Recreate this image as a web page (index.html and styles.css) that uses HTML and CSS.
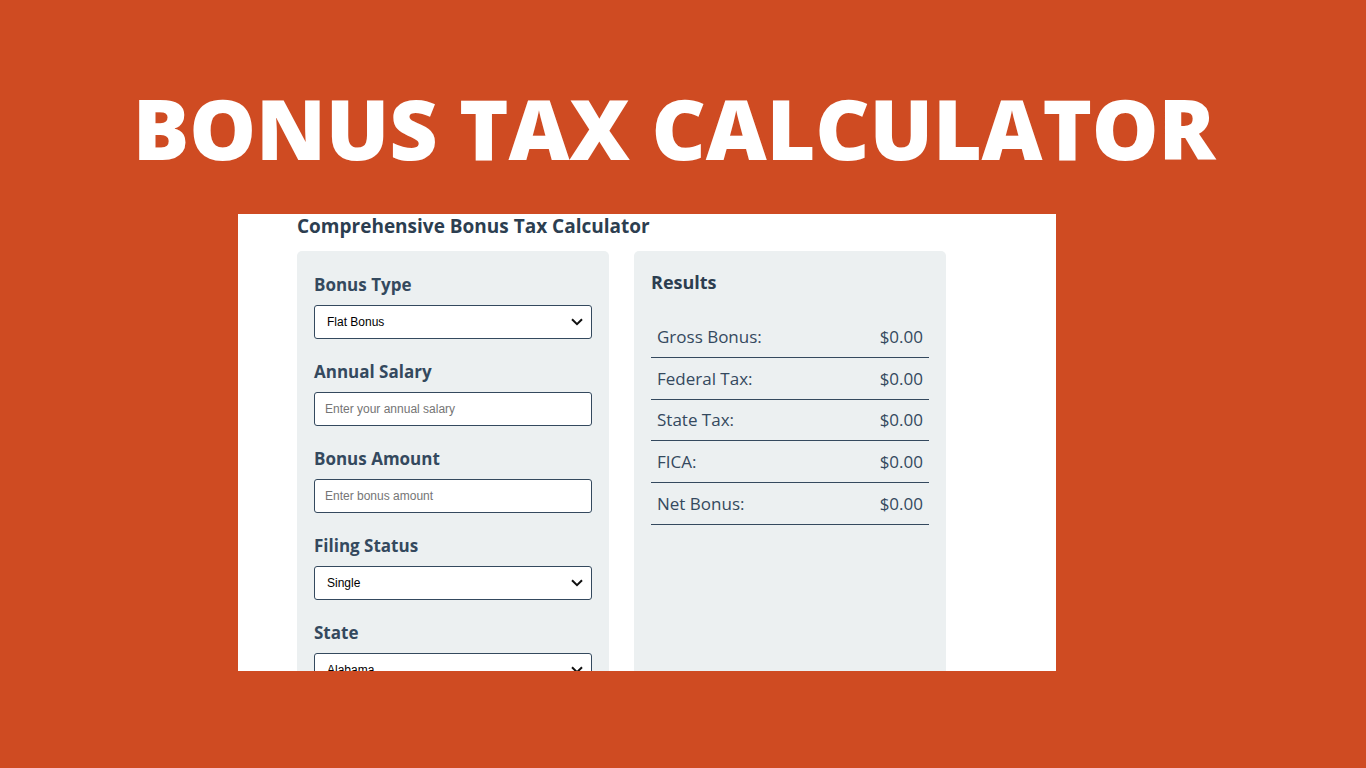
FILE: index.html
```html
<!DOCTYPE html>
<html>
<head>
<meta charset="utf-8">
<link rel="stylesheet" href="styles.css">
</head>
<body>
<h1 class="hero">BONUS TAX CALCULATOR</h1>
<div class="panel">
  <h2 class="calc-title">Comprehensive Bonus Tax Calculator</h2>
  <div class="cards">
    <div class="card form">
      <div class="field">
        <label class="label">Bonus Type</label>
        <div class="select-wrap">
          <select class="control"><option>Flat Bonus</option></select>
          <svg class="chev" viewBox="0 0 12 8" width="12" height="8"><path d="M1 1.2 L6 6.2 L11 1.2" fill="none" stroke="#111" stroke-width="2"/></svg>
        </div>
      </div>
      <div class="field">
        <label class="label">Annual Salary</label>
        <input class="control input" type="text" placeholder="Enter your annual salary">
      </div>
      <div class="field">
        <label class="label">Bonus Amount</label>
        <input class="control input" type="text" placeholder="Enter bonus amount">
      </div>
      <div class="field">
        <label class="label">Filing Status</label>
        <div class="select-wrap">
          <select class="control"><option>Single</option></select>
          <svg class="chev" viewBox="0 0 12 8" width="12" height="8"><path d="M1 1.2 L6 6.2 L11 1.2" fill="none" stroke="#111" stroke-width="2"/></svg>
        </div>
      </div>
      <div class="field">
        <label class="label">State</label>
        <div class="select-wrap">
          <select class="control"><option>Alabama</option></select>
          <svg class="chev" viewBox="0 0 12 8" width="12" height="8"><path d="M1 1.2 L6 6.2 L11 1.2" fill="none" stroke="#111" stroke-width="2"/></svg>
        </div>
      </div>
    </div>
    <div class="card results">
      <h3 class="results-title">Results</h3>
      <div class="rows">
        <div class="row"><span>Gross Bonus:</span><span>$0.00</span></div>
        <div class="row"><span>Federal Tax:</span><span>$0.00</span></div>
        <div class="row"><span>State Tax:</span><span>$0.00</span></div>
        <div class="row"><span>FICA:</span><span>$0.00</span></div>
        <div class="row"><span>Net Bonus:</span><span>$0.00</span></div>
      </div>
    </div>
  </div>
</div>
</body>
</html>
```
FILE: styles.css
```css
html, body {
  margin: 0;
  padding: 0;
}
body {
  background: #cf4b22;
  width: 1366px;
  height: 768px;
  overflow: hidden;
  font-family: "Open Sans", "Liberation Sans", sans-serif;
}
.hero {
  margin: 86px 0 0 0;
  padding-right: 18px;
  text-align: center;
  color: #ffffff;
  font-family: "Open Sans", sans-serif;
  font-weight: 800;
  font-size: 84px;
  line-height: 1;
  letter-spacing: -0.2px;
}
.panel {
  margin: 44px 0 0 238px;
  width: 818px;
  height: 457px;
  box-sizing: border-box;
  background: #ffffff;
  overflow: hidden;
  padding-left: 59px;
}
.calc-title {
  margin: 0;
  padding-top: 0;
  font-size: 19px;
  line-height: 24px;
  font-weight: 700;
  color: #2c3e50;
}
.cards {
  display: flex;
  gap: 25px;
  margin-top: 13px;
}
.card {
  width: 312px;
  box-sizing: border-box;
  background: #ecf0f1;
  border-radius: 5px;
  padding: 17px;
  height: 480px;
}
.form {
  padding-top: 20.5px;
}
.field {
  margin-bottom: 20px;
}
.label {
  display: block;
  font-size: 17px;
  line-height: 24px;
  font-weight: 700;
  color: #34495e;
  padding-top: 1.5px;
  margin-bottom: 7.5px;
}
.select-wrap {
  position: relative;
}
.control {
  display: block;
  width: 278px;
  height: 34px;
  box-sizing: border-box;
  border: 1px solid #34495e;
  border-radius: 3px;
  background: #ffffff;
  font-family: "Liberation Sans", Arial, sans-serif;
  font-size: 12px;
  color: #000;
  padding: 0 12px;
  -webkit-appearance: none;
  appearance: none;
  outline: none;
  margin: 0;
}
.input {
  padding: 0 10px;
}
.input::placeholder {
  color: #757575;
}
.chev {
  position: absolute;
  right: 9px;
  top: 13px;
  pointer-events: none;
}
.results-title {
  margin: 0;
  padding-top: 2px;
  font-size: 18px;
  line-height: 24px;
  font-weight: 700;
  color: #2c3e50;
}
.rows {
  margin-top: 22px;
}
.row {
  display: flex;
  justify-content: space-between;
  height: 41.75px;
  box-sizing: border-box;
  padding: 0 6px;
  align-items: center;
  border-bottom: 1px solid #34495e;
  font-size: 17px;
  color: #34495e;
}
```
